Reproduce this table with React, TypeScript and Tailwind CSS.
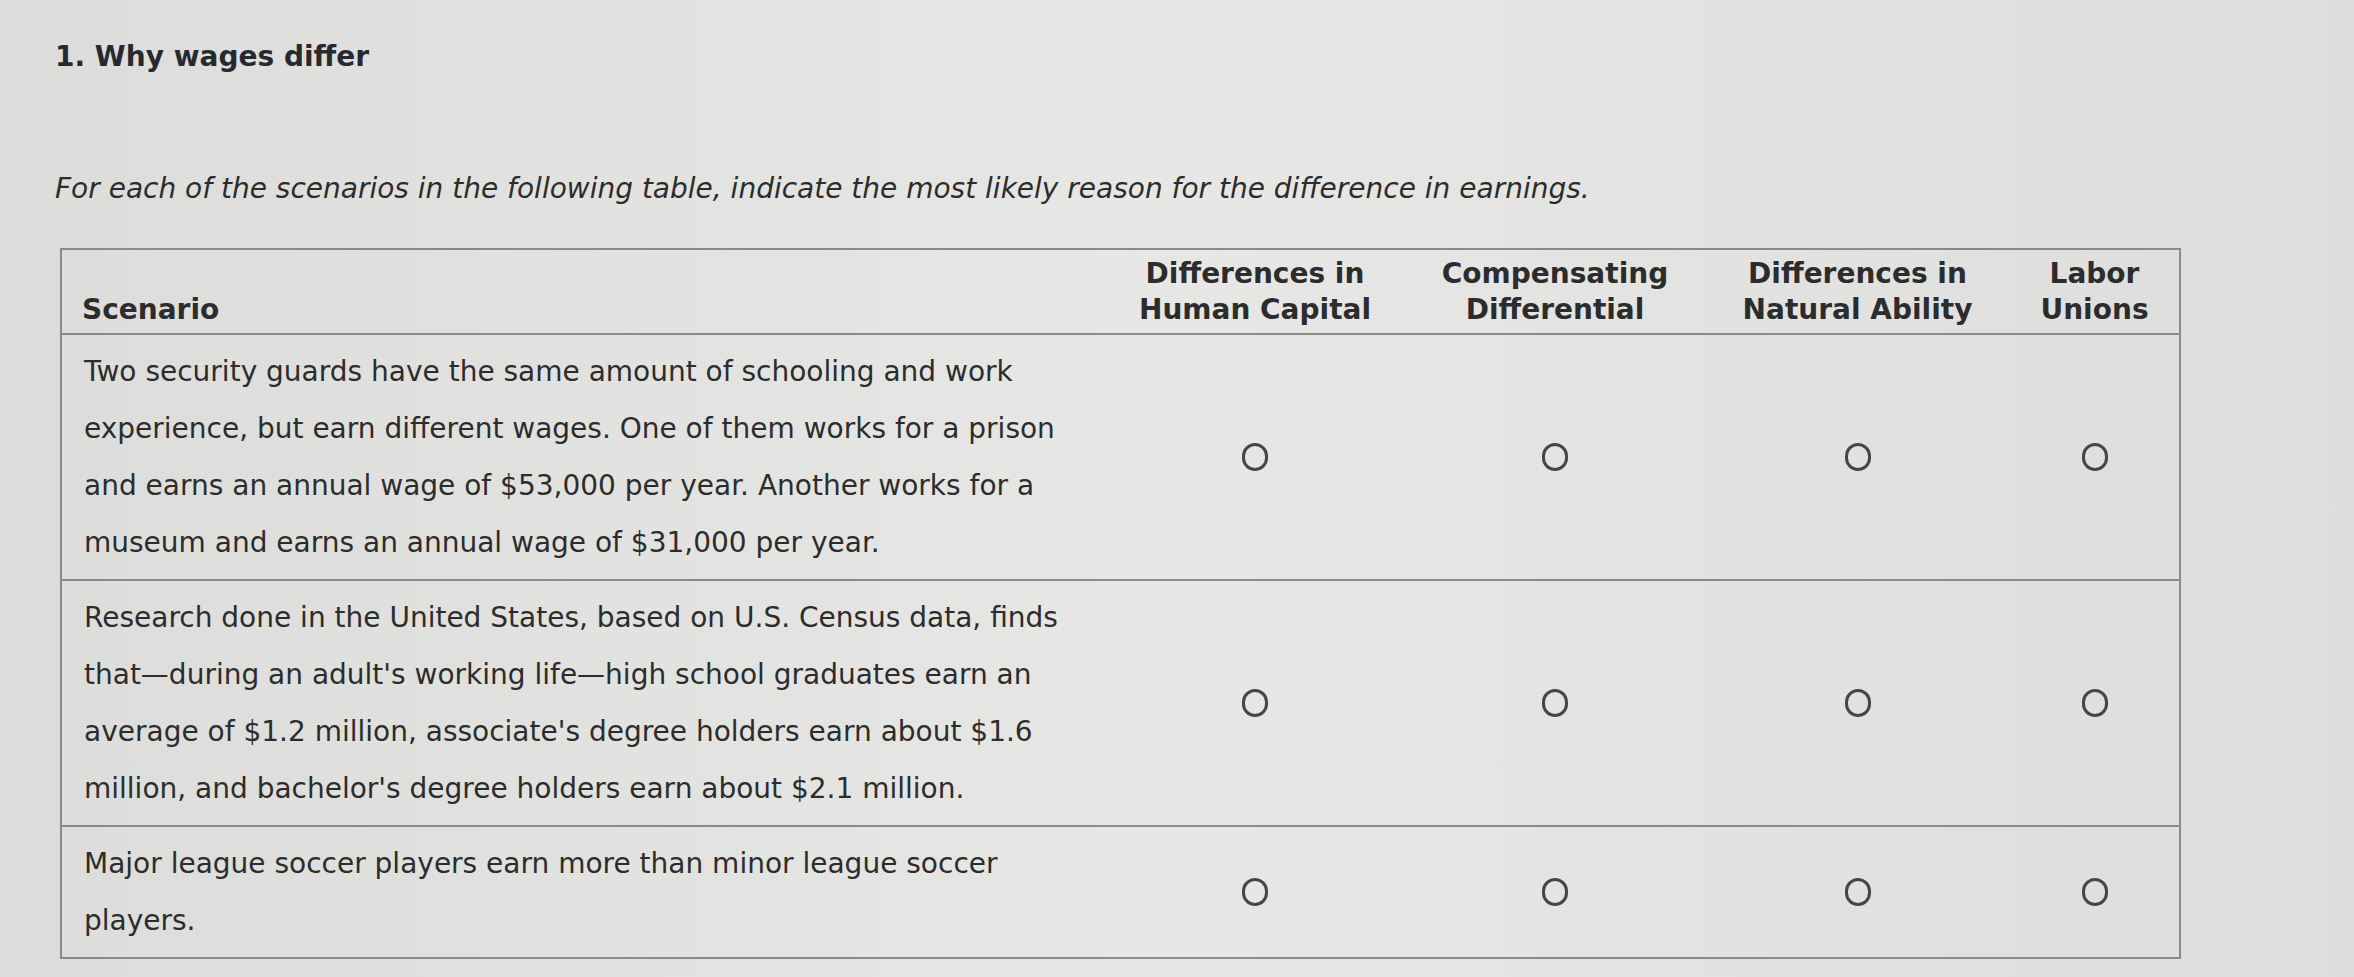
import React from "react";

const rows: string[][] = [
  [
    "Two security guards have the same amount of schooling and work",
    "experience, but earn different wages. One of them works for a prison",
    "and earns an annual wage of $53,000 per year. Another works for a",
    "museum and earns an annual wage of $31,000 per year.",
  ],
  [
    "Research done in the United States, based on U.S. Census data, finds",
    "that\u2014during an adult's working life\u2014high school graduates earn an",
    "average of $1.2 million, associate's degree holders earn about $1.6",
    "million, and bachelor's degree holders earn about $2.1 million.",
  ],
  [
    "Major league soccer players earn more than minor league soccer",
    "players.",
  ],
];

const headers: string[][] = [
  ["Differences in", "Human Capital"],
  ["Compensating", "Differential"],
  ["Differences in", "Natural Ability"],
  ["Labor", "Unions"],
];

function Radio() {
  return (
    <span className="block w-[26px] h-[28px] rounded-full border-[3px] border-[#464646]" />
  );
}

export default function App() {
  return (
    <div className="w-[2354px] h-[977px] overflow-hidden bg-gradient-to-r from-[#dcdddb] via-[#e7e8e6] to-[#dddedc] font-['DejaVu_Sans',sans-serif] text-[#2c2c2c]">
      <div className="pl-[55px] pt-[37px]">
        <h1 className="text-[28px] leading-[40px] font-bold text-[#262a30]">1. Why wages differ</h1>
        <p className="mt-[92px] text-[28px] leading-[40px] italic">
          For each of the scenarios in the following table, indicate the most likely reason for the difference in earnings.
        </p>
        <div className="mt-[39px] ml-[5px] w-[2121px] border-2 border-[#8a8a8a]">
          <div className="grid grid-cols-[1043px_300px_300px_305px_1fr] h-[83px] items-end pb-[5px] font-bold text-[28px] leading-[36px]">
            <div className="pl-[20px]">Scenario</div>
            {headers.map((h, i) => (
              <div key={i} className="text-center">
                {h[0]}
                <br />
                {h[1]}
              </div>
            ))}
          </div>
          {rows.map((lines, r) => (
            <div
              key={r}
              className="grid grid-cols-[1043px_300px_300px_305px_1fr] items-center border-t-2 border-[#8a8a8a] py-[8px]"
            >
              <div className="pl-[22px] text-[28px] leading-[57px] whitespace-nowrap">
                {lines.map((l, k) => (
                  <div key={k}>{l}</div>
                ))}
              </div>
              {[0, 1, 2, 3].map((c) => (
                <div key={c} className="flex justify-center">
                  <Radio />
                </div>
              ))}
            </div>
          ))}
        </div>
      </div>
    </div>
  );
}
